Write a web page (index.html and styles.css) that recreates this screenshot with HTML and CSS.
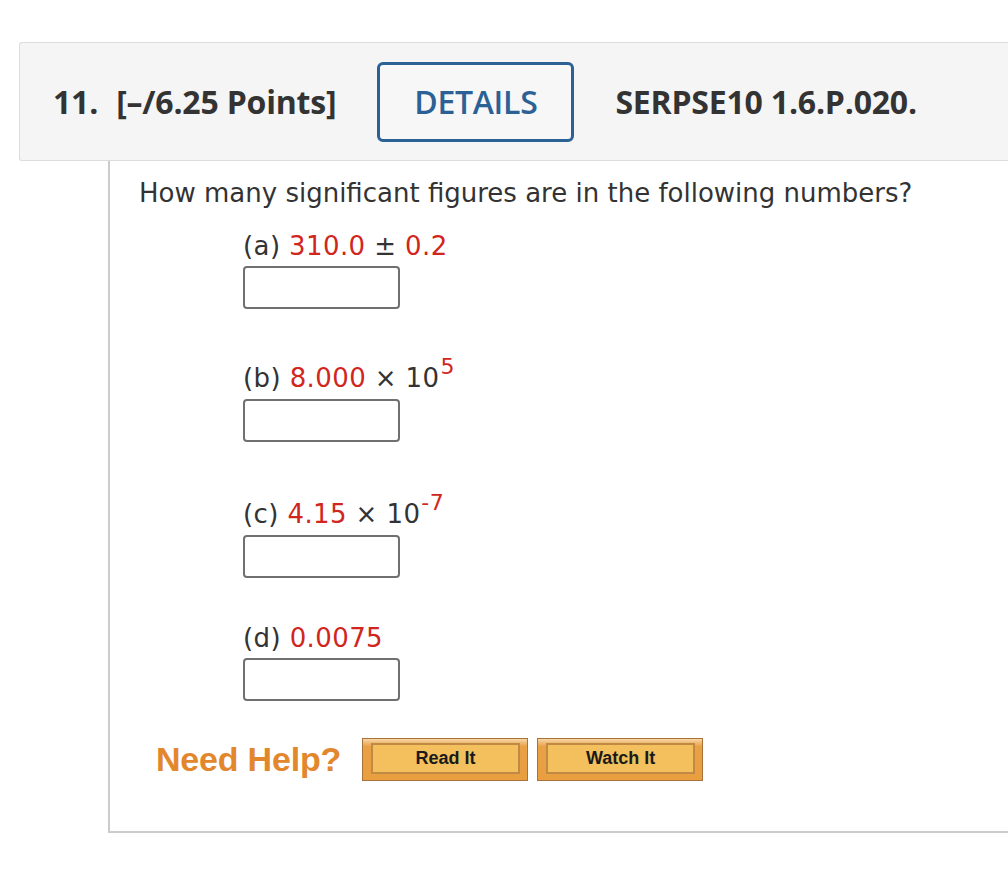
FILE: index.html
```html
<!DOCTYPE html>
<html>
<head>
<meta charset="utf-8">
<link rel="stylesheet" href="styles.css">
</head>
<body>
<div class="question">
  <div class="q-header">
    <span class="q-num">11.</span>
    <span class="q-points">[–/6.25 Points]</span>
    <button class="details-btn">DETAILS</button>
    <span class="q-ref">SERPSE10 1.6.P.020.</span>
  </div>
  <div class="q-body">
    <p class="prompt">How many significant figures are in the following numbers?</p>
    <div class="part part-a">
      <div class="label">(a) <span class="red">310.0</span> ± <span class="red">0.2</span></div>
      <div class="answer"></div>
    </div>
    <div class="part part-b">
      <div class="label label-sup">(b) <span class="red">8.000</span> × 10<sup class="red">5</sup></div>
      <div class="answer answer-sup"></div>
    </div>
    <div class="part part-c">
      <div class="label label-sup">(c) <span class="red">4.15</span> × 10<sup class="red">-7</sup></div>
      <div class="answer answer-sup"></div>
    </div>
    <div class="part part-d">
      <div class="label">(d) <span class="red">0.0075</span></div>
      <div class="answer"></div>
    </div>
    <div class="help">
      <span class="help-text">Need Help?</span>
      <button class="help-btn"><span class="help-inner">Read It</span></button>
      <button class="help-btn"><span class="help-inner">Watch It</span></button>
    </div>
  </div>
</div>
</body>
</html>
```

FILE: styles.css
```css
html, body {
  margin: 0;
  padding: 0;
  background: #ffffff;
}

.question {
  padding-top: 42px;
  padding-left: 19px;
}

.q-header {
  display: flex;
  align-items: center;
  height: 117px;
  background: #f5f5f5;
  border: 1px solid #dcdcdc;
  border-right: none;
  border-radius: 3px 0 0 3px;
  padding-left: 33px;
  font-family: "Open Sans", sans-serif;
  font-weight: 700;
  font-size: 32px;
  color: #333333;
  letter-spacing: -0.2px;
}

.q-num {
  margin-right: 18px;
}

.q-points {
  margin-right: 41px;
}

.details-btn {
  box-sizing: border-box;
  width: 197px;
  height: 80px;
  border: 3px solid #2b6194;
  border-radius: 6px;
  background: #f7f7f7;
  color: #2b6194;
  font-family: "Open Sans", sans-serif;
  font-weight: 600;
  font-size: 32px;
  letter-spacing: -0.3px;
  padding: 0;
  margin-right: 41px;
}

.q-body {
  margin-left: 89px;
  border-left: 2px solid #cccccc;
  border-bottom: 2px solid #cccccc;
  padding: 17px 0 50px 29px;
  font-family: "DejaVu Sans", Verdana, sans-serif;
  font-size: 26px;
  color: #333333;
}

.prompt {
  margin: 0;
  line-height: 30px;
}

.part {
  margin-left: 104px;
}

.part-a {
  margin-top: 23px;
}

.part-b {
  margin-top: 46px;
}

.part-c {
  margin-top: 49px;
}

.part-d {
  margin-top: 45px;
}

.label {
  line-height: 30px;
  white-space: nowrap;
  letter-spacing: 0.4px;
}

.label-sup {
  padding-top: 8px;
}

.label sup {
  font-size: 22px;
  line-height: 0;
  vertical-align: 0;
  position: relative;
  top: -13px;
  margin-left: 1px;
}

.red {
  color: #d1261d;
}

.answer {
  box-sizing: border-box;
  width: 157px;
  height: 43px;
  margin-top: 5px;
  border: 2px solid #707070;
  border-radius: 4px;
  background: #ffffff;
}

.answer-sup {
  margin-top: 6px;
}

.help {
  display: flex;
  align-items: center;
  margin-left: 17px;
  margin-top: 37px;
}

.help-text {
  font-family: "Liberation Sans", Arial, sans-serif;
  font-weight: 700;
  font-size: 34px;
  color: #e3872d;
  margin-right: 21px;
  letter-spacing: -0.2px;
}

.help-btn {
  box-sizing: border-box;
  width: 166px;
  height: 43px;
  padding: 4px 7px 6px 8px;
  margin-right: 9px;
  border: 1px solid #a8733a;
  background: linear-gradient(#f7d7a8 0%, #e9a146 18%, #e99e3f 100%);
  display: flex;
}

.help-inner {
  flex: 1;
  display: flex;
  align-items: center;
  justify-content: center;
  border: 2px solid #c08a45;
  background: #f3c05d;
  font-family: "Liberation Sans", Arial, sans-serif;
  font-weight: 700;
  font-size: 18px;
  color: #1a1a1a;
}
```
